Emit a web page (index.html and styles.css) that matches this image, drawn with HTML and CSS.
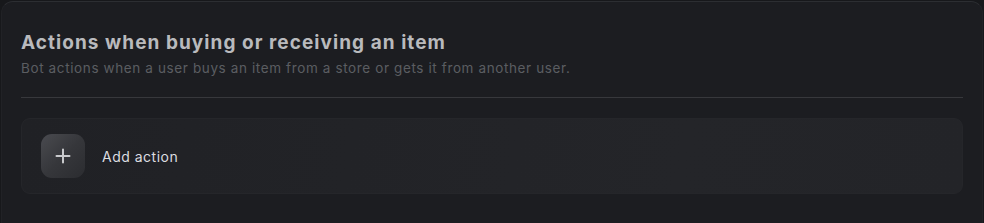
FILE: index.html
```html
<!DOCTYPE html>
<html lang="en">
<head>
<meta charset="utf-8">
<title>Actions</title>
<link rel="stylesheet" href="styles.css">
</head>
<body>
<section class="card">
  <header class="card-head">
    <h2 class="title">Actions when buying or receiving an item</h2>
    <p class="subtitle">Bot actions when a user buys an item from a store or gets it from another user.</p>
  </header>
  <hr class="divider">
  <button class="add" type="button">
    <span class="add-icon">
      <svg width="16" height="16" viewBox="0 0 16 16" aria-hidden="true">
        <path d="M8 1.5v13M1.5 8h13" stroke="#c9cacd" stroke-width="2" stroke-linecap="round" fill="none"/>
      </svg>
    </span>
    <span class="add-label">Add action</span>
  </button>
</section>
</body>
</html>
```
FILE: styles.css
```css
html, body {
  margin: 0;
  background: #17181b;
  height: 100%;
}
body {
  font-family: Inter, "Noto Sans", sans-serif;
  overflow: hidden;
}
.card {
  margin: 1px 1px 0 1px;
  min-height: 240px;
  box-sizing: border-box;
  background: #1c1d21;
  border-top: 1px solid #2c2e32;
  border-left: 1px solid #212226;
  border-right: 1px solid #212226;
  border-radius: 12px 12px 0 0;
  padding: 28px 19px 0 19px;
}
.card-head {
  display: flex;
  flex-direction: column;
  gap: 3px;
}
.title {
  margin: 0;
  font-size: 19px;
  line-height: 26px;
  font-weight: 700;
  color: #b9babd;
  letter-spacing: 1.05px;
}
.subtitle {
  margin: 0;
  font-size: 13.5px;
  line-height: 18px;
  color: #5b5d61;
  letter-spacing: 0.62px;
}
.divider {
  margin: 20px 0 20px 0;
  border: 0;
  height: 1px;
  background: #37383c;
}
.add {
  display: flex;
  align-items: center;
  gap: 17px;
  width: 100%;
  box-sizing: border-box;
  padding: 15px 19px;
  border: 1px solid #25262a;
  border-radius: 9px;
  background: linear-gradient(100deg, #202125 0%, #242529 70%, #232428 100%);
  font: inherit;
  cursor: pointer;
  text-align: left;
}
.add-icon {
  width: 44px;
  height: 44px;
  border-radius: 11px;
  background: linear-gradient(135deg, #4a4b50 0%, #36373b 50%, #2b2c30 100%);
  display: flex;
  align-items: center;
  justify-content: center;
  flex: none;
}
.add-label {
  font-size: 14px;
  color: #dcdde0;
  letter-spacing: 0.5px;
}
```
